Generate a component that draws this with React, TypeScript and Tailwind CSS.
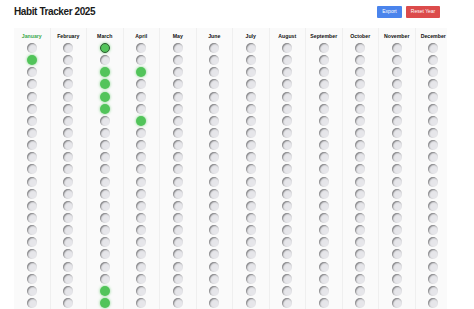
import React from 'react';

const months = [
  'January', 'February', 'March', 'April', 'May', 'June',
  'July', 'August', 'September', 'October', 'November', 'December',
];
const daysIn = [31, 28, 31, 30, 31, 30, 31, 31, 30, 31, 30, 31];

// month index -> checked days
const done: Record<number, number[]> = {
  0: [2],
  2: [1, 3, 4, 5, 6, 21, 22],
  3: [3, 7],
};

const Dot: React.FC<{ on: boolean; today?: boolean }> = ({ on, today }) => {
  if (on) {
    return (
      <div
        className={`w-[10px] h-[10px] shrink-0 rounded-full bg-[#52c45a] shadow-[0_0_3px_rgba(82,196,90,0.7)] ${
          today ? 'border border-[#2d5a31]' : ''
        }`}
      />
    );
  }
  return (
    <div className="w-[10px] h-[10px] shrink-0 rounded-full bg-[#e6e6ea] shadow-[inset_1px_1px_1.5px_rgba(0,0,0,0.45)]" />
  );
};

export default function App() {
  return (
    <div className="w-[474px] h-[309px] overflow-hidden bg-white font-['Liberation_Sans',Arial,sans-serif]">
      <div className="h-[23px] flex items-center justify-between pl-[14px] pr-[34px]">
        <h1 className="text-[10px] font-bold tracking-[-0.4px] text-[#1a1a1a] leading-none">Habit Tracker 2025</h1>
        <div className="flex gap-[4px]">
          <button className="w-[25px] h-[12px] rounded-[1px] bg-[#4a84ec] text-white text-[5px] leading-none">Export</button>
          <button className="w-[34px] h-[12px] rounded-[1px] bg-[#dc4b4b] text-white text-[5px] leading-none">Reset Year</button>
        </div>
      </div>

      <div className="ml-[14px] mt-[5px] w-[433px] overflow-hidden bg-[#fafafa] flex">
        {months.map((m, mi) => (
          <div
            key={m}
            className="w-[36.5px] shrink-0 border-r border-[#efefef] flex flex-col items-center pt-[3px]"
          >
            <div
              className={`h-[10px] text-[5.2px] font-bold leading-[10px] whitespace-nowrap ${
                mi === 0 ? 'text-[#3aa84a]' : 'text-[#111]'
              }`}
            >
              {m}
            </div>
            <div className="flex flex-col items-center gap-[2.15px] mt-[2px]">
              {Array.from({ length: daysIn[mi] }, (_, d) => (
                <Dot key={d} on={(done[mi] || []).includes(d + 1)} today={mi === 2 && d === 0} />
              ))}
            </div>
          </div>
        ))}
      </div>
    </div>
  );
}
